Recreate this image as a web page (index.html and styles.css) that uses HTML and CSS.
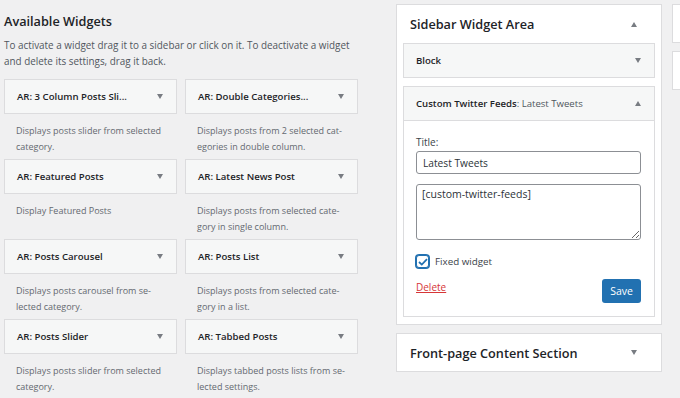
FILE: index.html
```html
<!DOCTYPE html>
<html lang="en">
<head>
  <meta charset="UTF-8" />
  <title>Widgets</title>
  <link rel="stylesheet" href="styles.css">
</head>
<body>

  <div class="page">
    <section class="available">
      <h2>Available Widgets</h2>
      <p class="intro">To activate a widget drag it to a sidebar or click on it. To deactivate a widget<br>and delete its settings, drag it back.</p>

      <div class="widget-grid">
        <div class="widget">
          <div class="widget-top"><span>AR: 3 Column Posts Sli...</span><i class="arrow down"></i></div>
          <p class="widget-desc">Displays posts slider from selected<br>category.</p>
        </div>
        <div class="widget">
          <div class="widget-top"><span>AR: Double Categories...</span><i class="arrow down"></i></div>
          <p class="widget-desc">Displays posts from 2 selected cat-<br>egories in double column.</p>
        </div>
        <div class="widget">
          <div class="widget-top"><span>AR: Featured Posts</span><i class="arrow down"></i></div>
          <p class="widget-desc">Display Featured Posts</p>
        </div>
        <div class="widget">
          <div class="widget-top"><span>AR: Latest News Post</span><i class="arrow down"></i></div>
          <p class="widget-desc">Displays posts from selected cate-<br>gory in single column.</p>
        </div>
        <div class="widget">
          <div class="widget-top"><span>AR: Posts Carousel</span><i class="arrow down"></i></div>
          <p class="widget-desc">Displays posts carousel from se-<br>lected category.</p>
        </div>
        <div class="widget">
          <div class="widget-top"><span>AR: Posts List</span><i class="arrow down"></i></div>
          <p class="widget-desc">Displays posts from selected cate-<br>gory in a list.</p>
        </div>
        <div class="widget">
          <div class="widget-top"><span>AR: Posts Slider</span><i class="arrow down"></i></div>
          <p class="widget-desc">Displays posts slider from selected<br>category.</p>
        </div>
        <div class="widget">
          <div class="widget-top"><span>AR: Tabbed Posts</span><i class="arrow down"></i></div>
          <p class="widget-desc">Displays tabbed posts lists from se-<br>lected settings.</p>
        </div>
      </div>
    </section>

    <section class="sidebars">
      <div class="panel">
        <div class="panel-head"><h3>Sidebar Widget Area</h3><i class="arrow up"></i></div>
        <div class="inner-widget">
          <div class="widget-top"><span>Block</span><i class="arrow down"></i></div>
        </div>
        <div class="inner-widget open">
          <div class="widget-top"><span>Custom Twitter Feeds<em>: Latest Tweets</em></span><i class="arrow up"></i></div>
          <form class="widget-inside">
            <label class="field-label">Title:</label>
            <input class="text-input" type="text" value="Latest Tweets">
            <textarea class="text-area">[custom-twitter-feeds]</textarea>
            <label class="check">
              <span class="checkbox">
                <svg width="10" height="8" viewBox="0 0 10 8"><path d="M1 4 L3.8 6.6 L9 1.2" fill="none" stroke="#2271b1" stroke-width="1.8"/></svg>
              </span>
              Fixed widget
            </label>
            <div class="actions">
              <a class="delete" href="#">Delete</a>
              <button class="save" type="button">Save</button>
            </div>
          </form>
        </div>
      </div>

      <div class="panel closed">
        <div class="panel-head"><h3>Front-page Content Section</h3><i class="arrow down"></i></div>
      </div>
    </section>

    <section class="more">
      <div class="stub"></div>
      <div class="stub"></div>
    </section>
  </div>

</body>
</html>
```

FILE: styles.css
```css
body {
  margin: 0;
  background: #f0f0f1;
  font-family: "Open Sans", sans-serif;
  color: #1d2327;
  overflow: hidden;
}

.page {
  display: flex;
  align-items: flex-start;
  padding: 4px 0 0 4px;
}

/* left column */
.available {
  flex: 0 0 354px;
}

.available h2 {
  margin: 7px 0 0;
  font-size: 12.7px;
  font-weight: 600;
  line-height: 20px;
}

.intro {
  margin: 6px 0 0;
  font-size: 9.9px;
  line-height: 16px;
  color: #50575e;
  white-space: nowrap;
}

.widget-grid {
  display: grid;
  grid-template-columns: 173px 173px;
  column-gap: 8px;
  margin-top: 10px;
}

.widget {
  height: 80px;
}

.widget-top {
  display: flex;
  align-items: center;
  justify-content: space-between;
  height: 33px;
  padding: 0 13px 0 12px;
  background: #f6f7f7;
  border: 1px solid #dcdcde;
  font-size: 9.6px;
  font-weight: 600;
  white-space: nowrap;
}

.widget-desc {
  margin: 0;
  padding: 9px 12px 0;
  font-size: 9px;
  line-height: 15.5px;
  color: #646970;
  white-space: nowrap;
}

.arrow {
  width: 0;
  height: 0;
  border-left: 3px solid transparent;
  border-right: 3px solid transparent;
}

.arrow.down {
  border-top: 5px solid #787c82;
}

.arrow.up {
  border-bottom: 5px solid #787c82;
}

/* sidebars */
.sidebars {
  flex: 0 0 266px;
  margin-left: 38px;
}

.panel {
  background: #fff;
  border: 1px solid #dcdcde;
  padding: 0 6px 7px;
}

.panel.closed {
  margin-top: 8px;
  padding-bottom: 0;
}

.panel-head {
  display: flex;
  align-items: center;
  justify-content: space-between;
  height: 38px;
  padding: 0 18px 0 7px;
}

.panel.closed .panel-head {
  height: 37px;
}

.panel-head h3 {
  margin: 0;
  font-size: 12.7px;
  font-weight: 600;
}

.inner-widget {
  margin-bottom: 8px;
}

.inner-widget:last-child {
  margin-bottom: 0;
}

.inner-widget em {
  font-style: normal;
  font-weight: 400;
  color: #50575e;
}

.inner-widget.open {
  border: 1px solid #dcdcde;
}

.inner-widget.open .widget-top {
  border: 0;
  border-bottom: 1px solid #dcdcde;
}

.widget-inside {
  display: flex;
  flex-direction: column;
  padding: 14px 13px 13px 12px;
}

.field-label {
  font-size: 10px;
  line-height: 15px;
  color: #3c434a;
}

.text-input {
  margin-top: 1px;
  height: 23px;
  box-sizing: border-box;
  padding: 0 6px;
  border: 1px solid #8c8f94;
  border-radius: 3px;
  font: 10.2px "Open Sans", sans-serif;
  color: #2c3338;
}

.text-area {
  margin-top: 10px;
  height: 56px;
  box-sizing: border-box;
  padding: 2px 5px;
  border: 1px solid #8c8f94;
  border-radius: 3px;
  font: 10.5px "Open Sans", sans-serif;
  color: #2c3338;
  resize: vertical;
}

.check {
  display: flex;
  align-items: center;
  gap: 6px;
  margin-top: 15px;
  height: 13px;
  font-size: 9.8px;
  color: #3c434a;
}

.checkbox {
  display: flex;
  align-items: center;
  justify-content: center;
  width: 11px;
  height: 11px;
  border: 1px solid #2271b1;
  border-radius: 3px;
  box-shadow: 0 0 0 1px #2271b1;
  background: #fff;
}

.actions {
  display: flex;
  justify-content: space-between;
  align-items: flex-start;
  margin-top: 11px;
}

.delete {
  margin-top: 1px;
  font-size: 10px;
  color: #d63638;
}

.save {
  width: 39px;
  height: 24px;
  padding: 0;
  border: 0;
  border-radius: 3px;
  background: #2271b1;
  color: #fff;
  font: 10.5px "Open Sans", sans-serif;
}

/* far right stubs */
.more {
  flex: 1;
  margin-left: 10px;
}

.stub {
  height: 37px;
  background: #fff;
  border: 1px solid #dcdcde;
  border-right: 0;
  margin-bottom: 8px;
}
```
